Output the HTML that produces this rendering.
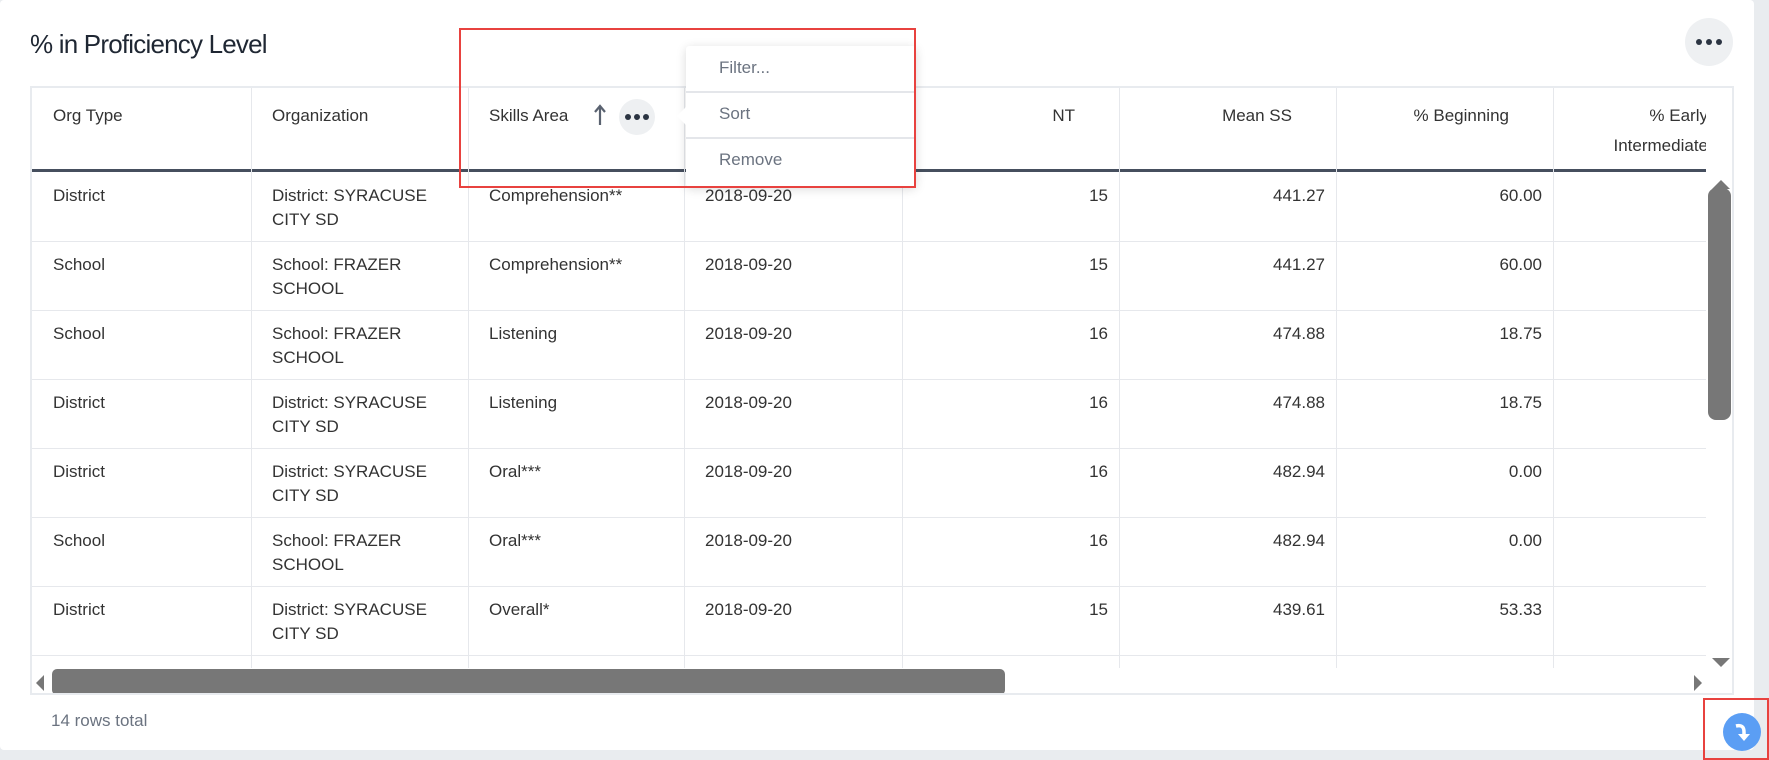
<!DOCTYPE html>
<html><head><meta charset="utf-8"><style>
*{box-sizing:border-box;margin:0;padding:0}
body{width:1769px;height:760px;background:#e9ecef;font-family:"Liberation Sans",sans-serif;position:relative;overflow:hidden;color:#333}
.card{position:absolute;left:0;top:0;width:1754px;height:750px;background:#fff;border-radius:4px}
.title{position:absolute;left:30px;top:29px;font-size:26px;color:#1f2733;letter-spacing:-0.8px}
.tbl{position:absolute;left:30px;top:86px;width:1704px;height:609px;border:2px solid #e8ebef;overflow:hidden}
.clip{position:absolute;left:0;top:0;width:1674px;height:580px;overflow:hidden}
.c{position:absolute;font-size:17px;line-height:24px;color:#333}
.vl{position:absolute;width:1px;background:#e6e8ec}
.hl{position:absolute;height:1px;background:#e6e8ec}
.r{text-align:right}
.menu{position:absolute;left:686px;top:46px;width:230px;height:141px;background:#fff;box-shadow:0 2px 10px rgba(0,0,0,.15);border-radius:3px}
.mi{position:absolute;left:33px;font-size:17px;color:#6b7380}
.dots{position:absolute;border-radius:50%;background:#eef0f2;display:flex;align-items:center;justify-content:center;gap:4px}
.dots i{display:block;width:6px;height:6px;border-radius:50%;background:#2b3442}
</style></head><body>
<div class="card"></div>
<div class="title">% in Proficiency Level</div>
<div class="dots" style="left:1685px;top:18px;width:48px;height:48px"><i></i><i></i><i></i></div>
<div class="tbl">
<div class="clip">
<div class="c" style="left:21px;top:16px">Org Type</div>
<div class="c" style="left:240px;top:16px">Organization</div>
<div class="c" style="left:457px;top:16px">Skills Area</div>
<svg style="position:absolute;left:561px;top:16px" width="14" height="22" viewBox="0 0 14 22"><path d="M7 2 L7 21 M2 8 L7 2 L12 8" stroke="#5a6270" stroke-width="2.2" fill="none"/></svg>
<div class="dots" style="left:587px;top:11px;width:36px;height:36px;gap:3px"><i></i><i></i><i></i></div>
<div class="c r" style="left:870px;width:173px;top:16px">NT</div>
<div class="c r" style="left:1087px;width:173px;top:16px">Mean SS</div>
<div class="c r" style="left:1304px;width:173px;top:16px">% Beginning</div>
<div class="c r" style="left:1521px;width:155px;top:13px;line-height:30px;white-space:nowrap">% Early<br>Intermediate</div>
<div style="position:absolute;left:0;top:81px;width:1674px;height:3px;background:#464f5e"></div>
<div class="vl" style="left:219px;top:0;height:580px"></div>
<div class="vl" style="left:436px;top:0;height:580px"></div>
<div class="vl" style="left:652px;top:0;height:580px"></div>
<div class="vl" style="left:870px;top:0;height:580px"></div>
<div class="vl" style="left:1087px;top:0;height:580px"></div>
<div class="vl" style="left:1304px;top:0;height:580px"></div>
<div class="vl" style="left:1521px;top:0;height:580px"></div>
<div class="hl" style="left:0;top:153px;width:1674px"></div>
<div class="hl" style="left:0;top:222px;width:1674px"></div>
<div class="hl" style="left:0;top:291px;width:1674px"></div>
<div class="hl" style="left:0;top:360px;width:1674px"></div>
<div class="hl" style="left:0;top:429px;width:1674px"></div>
<div class="hl" style="left:0;top:498px;width:1674px"></div>
<div class="hl" style="left:0;top:567px;width:1674px"></div>

<div class="c" style="left:21px;top:96px">District</div><div class="c" style="left:240px;top:96px">District: SYRACUSE<br>CITY SD</div><div class="c" style="left:457px;top:96px">Comprehension**</div><div class="c" style="left:673px;top:96px">2018-09-20</div><div class="c r" style="left:870px;width:206px;top:96px">15</div><div class="c r" style="left:1087px;width:206px;top:96px">441.27</div><div class="c r" style="left:1304px;width:206px;top:96px">60.00</div>

<div class="c" style="left:21px;top:165px">School</div><div class="c" style="left:240px;top:165px">School: FRAZER<br>SCHOOL</div><div class="c" style="left:457px;top:165px">Comprehension**</div><div class="c" style="left:673px;top:165px">2018-09-20</div><div class="c r" style="left:870px;width:206px;top:165px">15</div><div class="c r" style="left:1087px;width:206px;top:165px">441.27</div><div class="c r" style="left:1304px;width:206px;top:165px">60.00</div>

<div class="c" style="left:21px;top:234px">School</div><div class="c" style="left:240px;top:234px">School: FRAZER<br>SCHOOL</div><div class="c" style="left:457px;top:234px">Listening</div><div class="c" style="left:673px;top:234px">2018-09-20</div><div class="c r" style="left:870px;width:206px;top:234px">16</div><div class="c r" style="left:1087px;width:206px;top:234px">474.88</div><div class="c r" style="left:1304px;width:206px;top:234px">18.75</div>

<div class="c" style="left:21px;top:303px">District</div><div class="c" style="left:240px;top:303px">District: SYRACUSE<br>CITY SD</div><div class="c" style="left:457px;top:303px">Listening</div><div class="c" style="left:673px;top:303px">2018-09-20</div><div class="c r" style="left:870px;width:206px;top:303px">16</div><div class="c r" style="left:1087px;width:206px;top:303px">474.88</div><div class="c r" style="left:1304px;width:206px;top:303px">18.75</div>

<div class="c" style="left:21px;top:372px">District</div><div class="c" style="left:240px;top:372px">District: SYRACUSE<br>CITY SD</div><div class="c" style="left:457px;top:372px">Oral***</div><div class="c" style="left:673px;top:372px">2018-09-20</div><div class="c r" style="left:870px;width:206px;top:372px">16</div><div class="c r" style="left:1087px;width:206px;top:372px">482.94</div><div class="c r" style="left:1304px;width:206px;top:372px">0.00</div>

<div class="c" style="left:21px;top:441px">School</div><div class="c" style="left:240px;top:441px">School: FRAZER<br>SCHOOL</div><div class="c" style="left:457px;top:441px">Oral***</div><div class="c" style="left:673px;top:441px">2018-09-20</div><div class="c r" style="left:870px;width:206px;top:441px">16</div><div class="c r" style="left:1087px;width:206px;top:441px">482.94</div><div class="c r" style="left:1304px;width:206px;top:441px">0.00</div>

<div class="c" style="left:21px;top:510px">District</div><div class="c" style="left:240px;top:510px">District: SYRACUSE<br>CITY SD</div><div class="c" style="left:457px;top:510px">Overall*</div><div class="c" style="left:673px;top:510px">2018-09-20</div><div class="c r" style="left:870px;width:206px;top:510px">15</div><div class="c r" style="left:1087px;width:206px;top:510px">439.61</div><div class="c r" style="left:1304px;width:206px;top:510px">53.33</div>
</div>
<div style="position:absolute;left:1674px;top:84px;width:28px;height:496px;background:#fff"></div>
<div style="position:absolute;left:1680px;top:92px;width:0;height:0;border-left:9px solid transparent;border-right:9px solid transparent;border-bottom:9px solid #777"></div>
<div style="position:absolute;left:1676px;top:100px;width:23px;height:232px;background:#777;border-radius:8px"></div>
<div style="position:absolute;left:1680px;top:570px;width:0;height:0;border-left:9px solid transparent;border-right:9px solid transparent;border-top:9px solid #777"></div>
<div style="position:absolute;left:4px;top:587px;width:0;height:0;border-top:8px solid transparent;border-bottom:8px solid transparent;border-right:8px solid #777"></div>
<div style="position:absolute;left:20px;top:581px;width:953px;height:26px;background:#777;border-radius:5px"></div>
<div style="position:absolute;left:1662px;top:587px;width:0;height:0;border-top:8px solid transparent;border-bottom:8px solid transparent;border-left:8px solid #777"></div>
</div>
<div style="position:absolute;left:51px;top:711px;font-size:17px;color:#6b7380">14 rows total</div>
<div class="menu">
<div class="mi" style="top:12px">Filter...</div>
<div style="position:absolute;left:0;top:45px;width:230px;height:2px;background:#e4e6ea"></div>
<div class="mi" style="top:58px">Sort</div>
<div style="position:absolute;left:0;top:91px;width:230px;height:2px;background:#e4e6ea"></div>
<div class="mi" style="top:104px">Remove</div>
<div style="position:absolute;left:-9px;top:60px;width:0;height:0;border-top:10px solid transparent;border-bottom:10px solid transparent;border-right:10px solid #fff"></div>
</div>
<div style="position:absolute;left:459px;top:28px;width:457px;height:160px;border:2px solid #e8423f"></div>
<div style="position:absolute;left:1723px;top:713px;width:38px;height:38px;border-radius:50%;background:#5b9ef4"></div>
<svg style="position:absolute;left:1723px;top:713px" width="38" height="38" viewBox="0 0 38 38"><path d="M13 13 Q21 11 21 19 L21 22" stroke="#fff" stroke-width="3.5" fill="none"/><path d="M15 21 L27 21 L21 28 Z" fill="#fff"/></svg>
<div style="position:absolute;left:1703px;top:698px;width:66px;height:62px;border:2px solid #e8423f"></div>
</body></html>
